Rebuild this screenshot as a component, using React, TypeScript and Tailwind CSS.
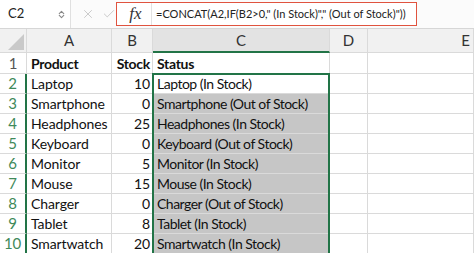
import { ChevronUp, ChevronDown, X, Check } from "lucide-react"

const rows = [
  ["Laptop", "10", "Laptop (In Stock)"],
  ["Smartphone", "0", "Smartphone (Out of Stock)"],
  ["Headphones", "25", "Headphones (In Stock)"],
  ["Keyboard", "0", "Keyboard (Out of Stock)"],
  ["Monitor", "5", "Monitor (In Stock)"],
  ["Mouse", "15", "Mouse (In Stock)"],
  ["Charger", "0", "Charger (Out of Stock)"],
  ["Tablet", "8", "Tablet (In Stock)"],
  ["Smartwatch", "20", "Smartwatch (In Stock)"],
]

const cell = "h-full border-r border-b border-[#dadada] flex items-center shrink-0 overflow-visible"

export default function App() {
  return (
    <div className="w-[474px] h-[253px] overflow-hidden bg-white text-[#111]" style={{ fontFamily: "Lato, 'Open Sans', sans-serif" }}>
      {/* Formula bar */}
      <div className="h-[29px] flex items-center border-b border-[#d6d6d6] bg-[#fbfbfb]">
        <div className="w-[71px] h-full shrink-0 flex items-center justify-between pl-2 pr-1 border-r border-[#e0e0e0] bg-white">
          <span className="text-[13px] text-[#222]">C2</span>
          <div className="flex flex-col text-[#888] -space-y-[5px]">
            <ChevronUp size={9} strokeWidth={3} />
            <ChevronDown size={9} strokeWidth={3} />
          </div>
        </div>
        <div className="w-[45px] shrink-0 flex items-center text-[#c4c4c4]">
          <X size={14} strokeWidth={1.5} className="ml-[10px]" />
          <Check size={14} strokeWidth={1.5} className="ml-[7px]" />
        </div>
        <div className="w-[301px] h-[24px] shrink-0 flex items-center border border-[#e0533f] bg-white overflow-hidden">
          <div className="w-[35px] h-full shrink-0 flex items-center justify-center pl-[3px] border-r border-[#e2e2e2]">
            <span className="italic text-[17px] text-[#333]" style={{ fontFamily: "'Liberation Serif', serif" }}>fx</span>
          </div>
          <span className="pl-[4px] text-[11px] text-[#222] whitespace-nowrap">
            =CONCAT(A2,IF(B2&gt;0," (In Stock)"," (Out of Stock)"))
          </span>
        </div>
        <div className="flex-1" />
      </div>

      {/* Grid */}
      <div className="relative">
        <div className="h-[24px] flex bg-[#f1f1f1] text-[15px] text-[#333]">
          <div className={`${cell} w-[27px] relative`}>
            <div className="absolute right-[2px] bottom-[2px] w-0 h-0 border-l-[16px] border-l-transparent border-b-[16px] border-b-[#c9c9c9]" />
          </div>
          <div className={`${cell} w-[85px] justify-center`}>A</div>
          <div className={`${cell} w-[41px] justify-center`}>B</div>
          <div className={`${cell} w-[177px] justify-center bg-[#e3e3e3] border-b-2 border-b-[#227447]`}>C</div>
          <div className={`${cell} w-[38px] justify-center`}>D</div>
          <div className={`${cell} flex-1 justify-end pr-[3px]`}>E</div>
        </div>

        <div className="h-[21px] flex text-[14px]">
          <div className={`${cell} w-[27px] justify-center text-[15px] text-[#555]`}>1</div>
          <div className={`${cell} w-[85px] pl-[4px] font-bold tracking-[-0.3px]`}>Product</div>
          <div className={`${cell} w-[41px] justify-end pr-[2px] font-bold tracking-[-0.3px]`}>Stock</div>
          <div className={`${cell} w-[177px] pl-[4px] font-bold tracking-[-0.3px]`}>Status</div>
          <div className={`${cell} w-[38px]`} />
          <div className={`${cell} flex-1`} />
        </div>

        {rows.map((r, i) => (
          <div key={i} className="h-[20px] flex text-[14px] tracking-[-0.1px]">
            <div className={`${cell} w-[27px] justify-center text-[15px] text-[#3f8a5a] border-r-2 border-r-[#227447]`}>{i + 2}</div>
            <div className={`${cell} w-[85px] pl-[4px]`}>{r[0]}</div>
            <div className={`${cell} w-[41px] justify-end pr-[2px]`}>{r[1]}</div>
            <div className={`${cell} w-[177px] pl-[4px] whitespace-nowrap tracking-[-0.5px] ${i === 0 ? "bg-white" : "bg-[#c6c6c6] border-[#b8b8b8]"}`}>{r[2]}</div>
            <div className={`${cell} w-[38px]`} />
            <div className={`${cell} flex-1`} />
          </div>
        ))}

        {/* selection outline C2:C10 */}
        <div className="absolute left-[152px] top-[44px] w-[178px] h-[190px] border-2 border-[#227447] pointer-events-none" />
      </div>
    </div>
  )
}
